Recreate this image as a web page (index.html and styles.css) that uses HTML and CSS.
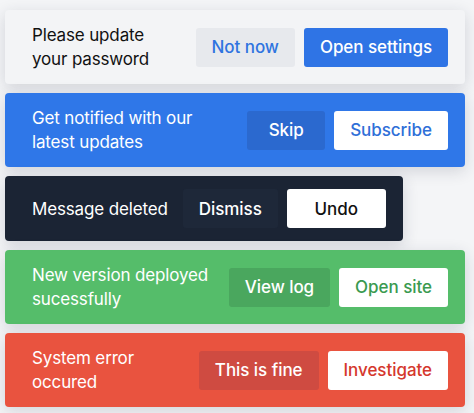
FILE: index.html
```html
<!DOCTYPE html>
<html lang="en">
<head>
    <meta charset="UTF-8">
    <meta name="viewport" content="width=device-width, initial-scale=1.0">
    <title>Banners</title>
    <link rel="stylesheet" href="styles.css">
</head>
<body>

<div class="stack">
    <div class="banner light">
        <p class="message">Please update your password</p>
        <div class="actions">
            <button class="btn secondary">Not now</button>
            <button class="btn primary">Open settings</button>
        </div>
    </div>

    <div class="banner blue">
        <p class="message">Get notified with our latest updates</p>
        <div class="actions">
            <button class="btn secondary skip">Skip</button>
            <button class="btn primary">Subscribe</button>
        </div>
    </div>

    <div class="banner dark">
        <p class="message">Message deleted</p>
        <div class="actions">
            <button class="btn secondary">Dismiss</button>
            <button class="btn primary undo">Undo</button>
        </div>
    </div>

    <div class="banner green">
        <p class="message">New version deployed sucessfully</p>
        <div class="actions">
            <button class="btn secondary">View log</button>
            <button class="btn primary">Open site</button>
        </div>
    </div>

    <div class="banner red">
        <p class="message">System error occured</p>
        <div class="actions">
            <button class="btn secondary">This is fine</button>
            <button class="btn primary">Investigate</button>
        </div>
    </div>
</div>

</body>
</html>
```

FILE: styles.css
```css
body {
    font-family: Inter, "Noto Sans", sans-serif;
    background-color: #f4f5f7;
    margin: 0;
    padding: 10px 5px;
}
.stack {
    display: flex;
    flex-direction: column;
    align-items: flex-start;
    gap: 9px;
}
.banner {
    display: flex;
    align-items: center;
    box-sizing: border-box;
    max-width: 460px;
    padding: 13px 17px 13px 27px;
    border-radius: 4px;
    box-shadow: 0 4px 16px rgba(30, 40, 60, 0.16);
}
.message {
    flex: 1 1 auto;
    min-width: 0;
    margin: 0 15px 0 0;
    font-size: 17px;
    line-height: 24px;
    letter-spacing: -0.15px;
}
.actions {
    display: flex;
    flex-shrink: 0;
    gap: 9px;
}
.btn {
    font-family: inherit;
    font-size: 17px;
    font-weight: 500;
    letter-spacing: -0.05px;
    height: 39px;
    padding: 0 16px;
    border: none;
    border-radius: 3px;
    cursor: pointer;
}
.btn.skip {
    min-width: 78px;
}
.btn.undo {
    min-width: 99px;
}

.light {
    background-color: #f3f4f6;
    color: #111;
}
.light .secondary {
    background-color: #e7e9ed;
    color: #2f74e0;
}
.light .primary {
    background-color: #2f74e5;
    color: white;
}

.blue {
    background-color: #2f77e8;
    color: white;
}
.blue .secondary {
    background-color: #2b69cf;
    color: white;
}
.blue .primary {
    background-color: white;
    color: #2f6fd8;
}

.dark {
    background-color: #1b2434;
    color: white;
}
.dark .secondary {
    background-color: #1e2839;
    color: white;
}
.dark .primary {
    background-color: white;
    color: #111;
}

.green {
    background-color: #55bd6a;
    color: white;
}
.green .secondary {
    background-color: #4aa75e;
    color: white;
}
.green .primary {
    background-color: white;
    color: #3a9a50;
}

.red {
    background-color: #e9533f;
    color: white;
}
.red .secondary {
    background-color: #cf4b41;
    color: white;
}
.red .primary {
    background-color: white;
    color: #d5382d;
}
```
